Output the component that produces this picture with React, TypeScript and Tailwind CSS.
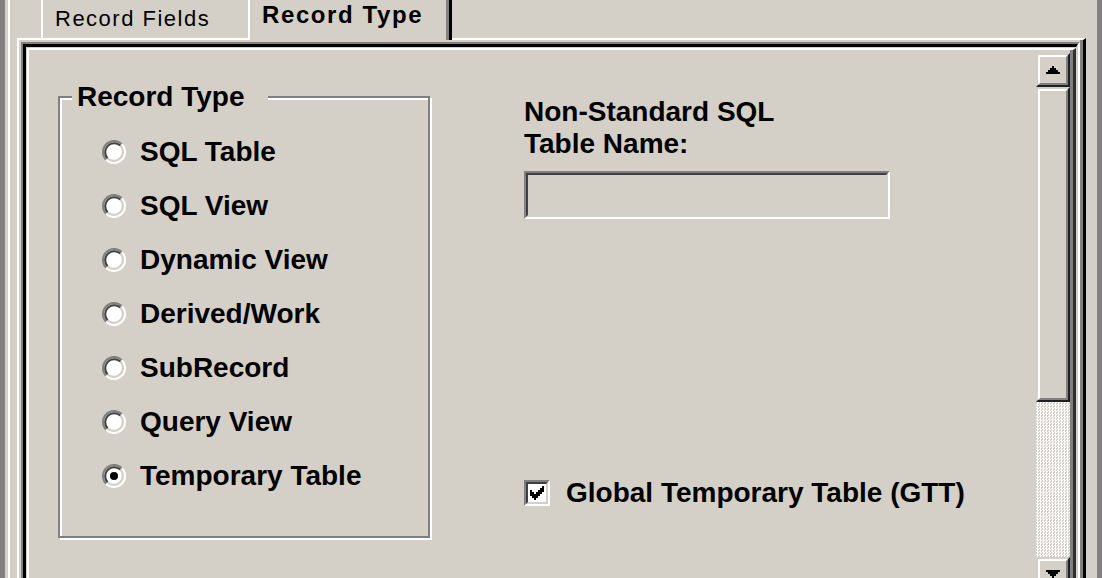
import React from 'react'

const recordTypes = [
  'SQL Table',
  'SQL View',
  'Dynamic View',
  'Derived/Work',
  'SubRecord',
  'Query View',
  'Temporary Table',
]

function Radio({ checked }: { checked?: boolean }) {
  return (
    <svg width="24" height="24" viewBox="0 0 12 12" className="shrink-0">
      <circle cx="6" cy="6" r="4.2" fill="#fff" />
      <path d="M2.11 9.89A5.5 5.5 0 0 1 9.89 2.11" stroke="#808080" fill="none" />
      <path d="M2.82 9.18A4.5 4.5 0 0 1 9.18 2.82" stroke="#404040" fill="none" />
      <path d="M9.89 2.11A5.5 5.5 0 0 1 2.11 9.89" stroke="#fff" fill="none" />
      <path d="M9.18 2.82A4.5 4.5 0 0 1 2.82 9.18" stroke="#d4d0c8" fill="none" />
      {checked && <circle cx="6" cy="6" r="2" fill="#000" />}
    </svg>
  )
}

function ScrollButton({ dir }: { dir: 'up' | 'down' }) {
  return (
    <div className="h-[34px] w-[34px] shrink-0 border-2 border-t-[#d4d0c8] border-l-[#d4d0c8] border-r-[#202020] border-b-[#202020]">
      <div className="flex h-full w-full items-center justify-center border-2 border-t-white border-l-white border-r-[#808080] border-b-[#808080] bg-[#d4d0c8]">
        <svg width="14" height="8" viewBox="0 0 7 4" shapeRendering="crispEdges">
          {dir === 'up' ? (
            <path d="M3 0h1v1h1v1h1v1h1v1H0V3h1V2h1V1h1z" fill="#000" />
          ) : (
            <path d="M0 0h7v1H6v1H5v1H4v1H3V3H2V2H1V1H0z" fill="#000" />
          )}
        </svg>
      </div>
    </div>
  )
}

function Scrollbar() {
  return (
    <div className="mt-[3px] flex w-[34px] shrink-0 flex-col">
      <ScrollButton dir="up" />
      {/* thumb */}
      <div className="h-[315px] w-[34px] shrink-0 border-2 border-t-[#d4d0c8] border-l-[#d4d0c8] border-r-[#202020] border-b-[#202020]">
        <div className="h-full w-full border-2 border-t-white border-l-white border-r-[#808080] border-b-[#808080] bg-[#d4d0c8]" />
      </div>
      <div className="h-[155px] w-[34px] shrink-0 bg-[image:repeating-conic-gradient(#ffffff_0%_25%,#d4d0c8_0%_50%)] bg-[length:3px_3px]" />
      <ScrollButton dir="down" />
    </div>
  )
}

function CheckMark() {
  // classic 7x7 check bitmap
  const rows = ['......x', '.....xx', 'x...xxx', 'xx.xxx.', 'xxxxx..', '.xxx...', '..x....']
  return (
    <svg width="14" height="14" viewBox="0 0 7 7" shapeRendering="crispEdges">
      {rows.flatMap((r, y) =>
        r.split('').map((c, x) => (c === 'x' ? <rect key={`${x}-${y}`} x={x} y={y} width="1" height="1" fill="#000" /> : null)),
      )}
    </svg>
  )
}

export default function App() {
  return (
    <div className="flex h-[578px] w-[1102px] overflow-hidden bg-[#d4d0c8] font-['Liberation_Sans',Arial,sans-serif] text-black">
      <div className="w-[5px] shrink-0 bg-[#808080]" />
      <div className="ml-[3px] w-[2px] shrink-0 bg-white" />

      <div className="ml-[7px] flex w-[1069px] shrink-0 flex-col">
        {/* tabs */}
        <div className="relative z-10 flex h-[38px] shrink-0 items-start">
          <div className="ml-[24px] h-[38px] w-[207px] border-l-2 border-white pl-[12px] pt-[8px] text-[22px] leading-[22px] tracking-[1.5px]">
            Record Fields
          </div>
          <div className="h-[40px] w-[204px] border-l-2 border-r-[3px] border-l-white border-r-black bg-[#d4d0c8] pl-[12px] pt-[3px] text-[24px] font-bold leading-[24px] tracking-[1.6px] shadow-[inset_-3px_0_0_#808080]">
            Record Type
          </div>
        </div>

        {/* tab panel */}
        <div className="flex flex-1 flex-col border-l-2 border-t-2 border-r-[3px] border-l-white border-t-white border-r-black">
          <div className="flex flex-1 flex-col border-r-[3px] border-r-[#808080] pl-[2px] pt-[2px]">
            {/* sunken frame */}
            <div className="flex flex-1 flex-col border-l-2 border-t-2 border-r-2 border-l-[#808080] border-t-[#808080] border-r-white">
              <div className="flex flex-1 flex-col border-l-[3px] border-t-[3px] border-r-2 border-l-black border-t-black border-r-[#d4d0c8] pl-[1px] pt-[1px]">
                <div className="flex flex-1 flex-col border-l-2 border-t-2 border-r-[3px] border-l-white border-t-white border-r-[#303030]">
                  <div className="flex flex-1 border-r-[3px] border-r-[#808080]">
                    {/* main area */}
                    <div className="flex flex-1 items-start">
                      {/* group box */}
                      <div className="relative ml-[29px] mt-[46px] h-[442px] w-[372px] shrink-0 border-2 border-[#808080] shadow-[2px_2px_0_#fff,inset_2px_2px_0_#fff]">
                        <span className="absolute -top-[15px] left-[12px] bg-[#d4d0c8] pl-[5px] pr-[23px] text-[28px] font-bold leading-[28px]">
                          Record Type
                        </span>
                        <div className="flex flex-col pl-[42px] pt-[27px]">
                          {recordTypes.map((t) => (
                            <div key={t} className="flex h-[54px] items-center gap-[14px]">
                              <Radio checked={t === 'Temporary Table'} />
                              <span className="text-[28px] font-bold leading-[28px]">{t}</span>
                            </div>
                          ))}
                        </div>
                      </div>

                      {/* right column */}
                      <div className="ml-[94px] mt-[46px] flex flex-col">
                        <div className="text-[28px] font-bold leading-[32px]">
                          Non-Standard SQL
                          <br />
                          Table Name:
                        </div>
                        <div className="mt-[11px] h-[48px] w-[366px] border-2 border-t-[#808080] border-l-[#808080] border-b-white border-r-white">
                          <div className="h-full w-full border-2 border-t-[#404040] border-l-[#404040] border-b-[#d4d0c8] border-r-[#d4d0c8]" />
                        </div>
                        <div className="mt-[260px] flex h-[28px] items-center gap-[16px]">
                          <div className="h-[26px] w-[26px] shrink-0 border-2 border-t-[#808080] border-l-[#808080] border-b-white border-r-white">
                            <div className="flex h-full w-full items-center justify-center border-2 border-t-[#404040] border-l-[#404040] border-b-[#d4d0c8] border-r-[#d4d0c8] bg-white">
                              <CheckMark />
                            </div>
                          </div>
                          <span className="whitespace-nowrap text-[28px] font-bold leading-[28px]">
                            Global Temporary Table (GTT)
                          </span>
                        </div>
                      </div>
                    </div>

                    <Scrollbar />
                  </div>
                </div>
              </div>
            </div>
          </div>
        </div>
      </div>

      <div className="ml-[11px] w-[5px] shrink-0 bg-[#808080]" />
    </div>
  )
}
